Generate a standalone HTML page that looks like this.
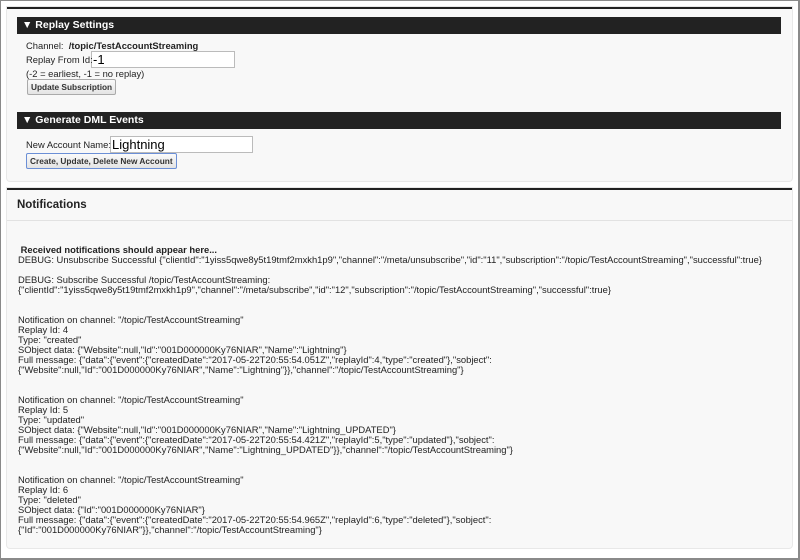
<!DOCTYPE html>
<html><head><style>
*{margin:0;padding:0;box-sizing:border-box}
html,body{width:800px;height:560px;overflow:hidden;background:#fff}
body{border:1px solid #8a8a8a;border-right:2px solid #8a8a8a;border-bottom:2px solid #8a8a8a;position:relative;font-family:"Liberation Sans",Arial,sans-serif;color:#222}
.panel{position:absolute;left:6px;width:785px;background:#f8f8f8;border-top:2px solid #222;border-radius:0 0 3px 3px;box-shadow:0 0 0 1px #e8e8e8}
.bar{position:absolute;left:10px;width:764px;height:17px;background:#222;color:#fff;font-weight:bold;font-size:10.5px;line-height:17px;padding-left:5px}
.t{position:absolute;font-size:9.4px;white-space:nowrap;color:#222}
input{position:absolute;font-family:"Liberation Sans",Arial,sans-serif;font-size:13px;height:17px;border:1px solid #bbb;background:#fff;padding-left:1px;line-height:15px}
.btn{position:absolute;font-size:8.3px;font-weight:bold;height:16px;line-height:14px;border:1px solid #aaa;border-radius:2px;background:linear-gradient(#fafafa,#e4e4e4);padding:0 3px;color:#333;white-space:nowrap}
.log{position:absolute;left:11px;top:55px;font-size:9.4px;line-height:10px;white-space:pre;color:#222}
</style></head><body>
<div class="panel" style="top:6px;height:174px">
  <div class="bar" style="top:8px">&#9660; Replay Settings</div>
  <div class="t" style="left:19px;top:31px">Channel:&nbsp; <b>/topic/TestAccountStreaming</b></div>
  <input style="left:84px;top:42px;width:144px" value="-1">
  <div class="t" style="left:19px;top:45px">Replay From Id:</div>
  <div class="t" style="left:19px;top:59px">(-2 = earliest, -1 = no replay)</div>
  <div class="btn" style="left:20px;top:70px">Update Subscription</div>
  <div class="bar" style="top:103px">&#9660; Generate DML Events</div>
  <input style="left:103px;top:127px;width:143px" value="Lightning">
  <div class="t" style="left:19px;top:130px">New Account Name:</div>
  <div class="btn" style="left:19px;top:144px;border-color:#6b8fd6">Create, Update, Delete New Account</div>
</div>
<div class="panel" style="top:187px;height:360px">
  <div style="position:absolute;left:10px;top:9px;font-size:11.5px;font-weight:bold">Notifications</div>
  <div style="position:absolute;left:0;right:0;top:30px;border-top:1px solid #e2e2e2"></div>
  <div class="log"><b> Received notifications should appear here...</b>
DEBUG: Unsubscribe Successful {"clientId":"1yiss5qwe8y5t19tmf2mxkh1p9","channel":"/meta/unsubscribe","id":"11","subscription":"/topic/TestAccountStreaming","successful":true}

DEBUG: Subscribe Successful /topic/TestAccountStreaming:
{"clientId":"1yiss5qwe8y5t19tmf2mxkh1p9","channel":"/meta/subscribe","id":"12","subscription":"/topic/TestAccountStreaming","successful":true}


Notification on channel: "/topic/TestAccountStreaming"
Replay Id: 4
Type: "created"
SObject data: {"Website":null,"Id":"001D000000Ky76NIAR","Name":"Lightning"}
Full message: {"data":{"event":{"createdDate":"2017-05-22T20:55:54.051Z","replayId":4,"type":"created"},"sobject":
{"Website":null,"Id":"001D000000Ky76NIAR","Name":"Lightning"}},"channel":"/topic/TestAccountStreaming"}


Notification on channel: "/topic/TestAccountStreaming"
Replay Id: 5
Type: "updated"
SObject data: {"Website":null,"Id":"001D000000Ky76NIAR","Name":"Lightning_UPDATED"}
Full message: {"data":{"event":{"createdDate":"2017-05-22T20:55:54.421Z","replayId":5,"type":"updated"},"sobject":
{"Website":null,"Id":"001D000000Ky76NIAR","Name":"Lightning_UPDATED"}},"channel":"/topic/TestAccountStreaming"}


Notification on channel: "/topic/TestAccountStreaming"
Replay Id: 6
Type: "deleted"
SObject data: {"Id":"001D000000Ky76NIAR"}
Full message: {"data":{"event":{"createdDate":"2017-05-22T20:55:54.965Z","replayId":6,"type":"deleted"},"sobject":
{"Id":"001D000000Ky76NIAR"}},"channel":"/topic/TestAccountStreaming"}</div>
</div>
</body></html>
